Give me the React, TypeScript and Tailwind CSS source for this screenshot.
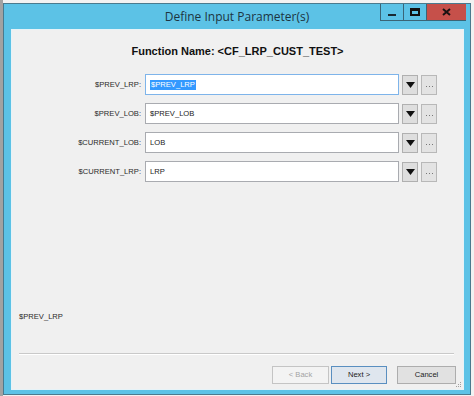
import React from "react";

const params = [
  { label: "$PREV_LRP:", value: "$PREV_LRP", focused: true },
  { label: "$PREV_LOB:", value: "$PREV_LOB" },
  { label: "$CURRENT_LOB:", value: "LOB" },
  { label: "$CURRENT_LRP:", value: "LRP" },
];

const ui = { fontFamily: '"Liberation Sans", Arial, sans-serif' };

const ParamRow = ({ label, value, focused }: { label: string; value: string; focused?: boolean }) => (
  <div className="flex items-center h-[21px]">
    <div className="w-[133px] pr-[4px] text-right text-[7.6px] text-[#2a2a2a]">{label}</div>
    <div
      className={`w-[254px] h-[21px] bg-white border flex items-center pl-[4px] text-[7.6px] text-[#1a1a1a] ${
        focused ? "border-[#7eb4ea]" : "border-[#a9abb0]"
      }`}
    >
      {focused ? <span className="bg-[#3399ff] text-white px-[1px] leading-[10px]">{value}</span> : value}
    </div>
    <div className="ml-[3px] w-[16px] h-[20px] bg-[#dedede] border border-[#b0b0b0] flex items-center justify-center">
      <svg width="9" height="6" viewBox="0 0 9 6">
        <polygon points="0,0 9,0 4.5,6" fill="#111" />
      </svg>
    </div>
    <div className="ml-[3px] w-[16px] h-[20px] bg-[#e3e3e3] border border-[#b8b8b8] flex items-end justify-center pb-[6px]">
      <svg width="7" height="2" viewBox="0 0 7 2">
        <rect x="0" y="0" width="1" height="1" fill="#777" />
        <rect x="3" y="0" width="1" height="1" fill="#777" />
        <rect x="6" y="0" width="1" height="1" fill="#777" />
      </svg>
    </div>
  </div>
);

export default function App() {
  return (
    <div className="w-[474px] h-[396px] overflow-hidden bg-[#f2f2f2] border-l-[3px] border-l-[#a2a2a2] pt-[3px]" style={ui}>
      <div className="w-[468px] h-[392px] border border-[#4a7a8e] bg-[#5cc2e6] flex flex-col pl-[7px] pr-[6px] pb-[4px]">
        {/* title bar */}
        <div className="h-[25px] -ml-[7px] -mr-[6px] grid grid-cols-[90px_1fr_90px] items-start">
          <div />
          <div
            className="h-[25px] flex items-center justify-center text-[12px] text-[#1d3441]"
            style={{ fontFamily: '"Open Sans", sans-serif' }}
          >
            Define Input Parameter(s)
          </div>
          <div className="flex justify-end pr-[4px]">
            <div className="flex h-[17px] border-l border-b border-[#3a6577]">
              <div className="w-[23px] h-full border-r border-[#3a6577] flex items-end justify-center pb-[4px]">
                <div className="w-[8px] h-[2px] bg-[#1a2a33]" />
              </div>
              <div className="w-[23px] h-full border-r border-[#3a6577] flex items-center justify-center">
                <div className="w-[10px] h-[8px] border-[2px] border-t-[3px] border-[#111]" />
              </div>
              <div className="w-[39px] h-full bg-[#c6504a] flex items-center justify-center">
                <svg width="9" height="8" viewBox="0 0 9 8">
                  <path d="M1 1 L8 7 M8 1 L1 7" stroke="#1a1212" strokeWidth="2" />
                </svg>
              </div>
            </div>
          </div>
        </div>

        {/* content */}
        <div className="relative flex-1 bg-[#f0f0f0] border border-[#e6f3f8] flex flex-col">
          <div className="pt-[14px] text-center text-[11px] font-bold text-[#111] leading-[14px]">
            Function Name: &lt;CF_LRP_CUST_TEST&gt;
          </div>
          <div className="mt-[16px] flex flex-col gap-[8px]">
            {params.map((p) => (
              <ParamRow key={p.label} {...p} />
            ))}
          </div>
          <div className="flex-1" />
          <div className="pl-[7px] h-[12px] leading-[12px] text-[7.6px] text-[#2a2a2a]">$PREV_LRP</div>
          <div className="mt-[30px] ml-[7px] mr-[9px] h-[2px] border-t border-t-[#c9c9c9] border-b border-b-white" />
          <div className="mt-[11px] mb-[5px] flex justify-end pr-[7px] text-[7.6px]">
            <div className="w-[57px] h-[18px] border border-[#c4c4c4] bg-[#f3f3f3] text-[#a3a3a3] flex items-center justify-center">
              &lt; Back
            </div>
            <div className="ml-[2px] w-[56px] h-[18px] border border-[#5a8fc0] bg-[#dfe6ee] text-[#1a1a1a] flex items-center justify-center">
              Next &gt;
            </div>
            <div className="ml-[10px] w-[59px] h-[18px] border border-[#adadad] bg-[#e1e1e1] text-[#1a1a1a] flex items-center justify-center">
              Cancel
            </div>
          </div>
          <svg className="absolute right-[1px] bottom-[1px]" width="6" height="6" viewBox="0 0 6 6">
            <rect x="4" y="0" width="1" height="1" fill="#a0a0a0" />
            <rect x="2" y="2" width="1" height="1" fill="#a0a0a0" />
            <rect x="4" y="2" width="1" height="1" fill="#a0a0a0" />
            <rect x="0" y="4" width="1" height="1" fill="#a0a0a0" />
            <rect x="2" y="4" width="1" height="1" fill="#a0a0a0" />
            <rect x="4" y="4" width="1" height="1" fill="#a0a0a0" />
          </svg>
        </div>
      </div>
    </div>
  );
}
